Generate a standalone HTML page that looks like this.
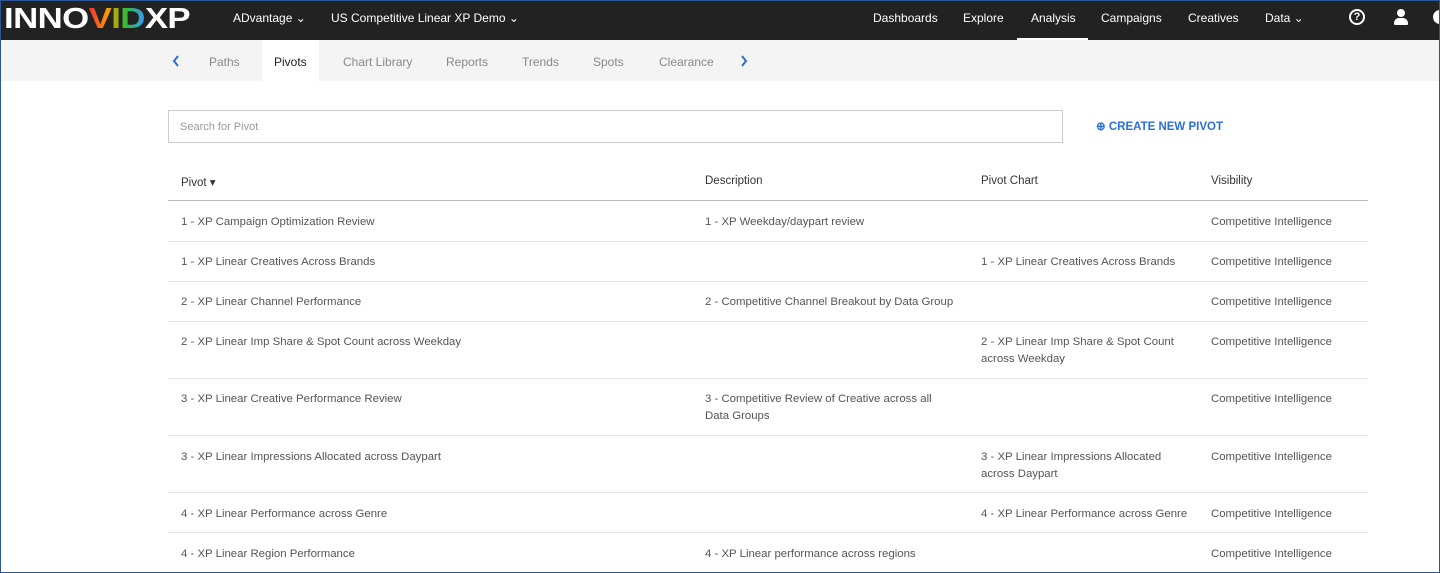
<!DOCTYPE html><html><head><style>
*{box-sizing:border-box;margin:0;padding:0}
body{width:1440px;height:573px;overflow:hidden;font-family:"Liberation Sans",Arial,sans-serif;background:#fff;position:relative}
.frame{position:absolute;left:0;top:0;width:1440px;height:573px;border:1px solid #2b5797;pointer-events:none;z-index:5}
.top{position:absolute;left:0;top:0;width:1440px;height:40px;background:#222;color:#fff;font-size:12px}
.top span{position:absolute;top:11px}
.sub{position:absolute;left:0;top:40px;width:1440px;height:41px;background:#f4f4f4;font-size:12px;color:#888}
.sub span{position:absolute;top:15px}
.t{position:absolute;font-size:11.4px;color:#555;line-height:17px}
.h{position:absolute;font-size:11.5px;color:#333;top:175px}
.ln{position:absolute;left:168px;width:1200px;height:1px;background:#e6e6e6}
</style></head><body>
<div class="frame"></div>
<div class="top">
<span style="left:4px;top:3px;font-size:29px;font-weight:bold;letter-spacing:-0.5px;transform:scaleX(1.2);transform-origin:left">INNO<span style="position:static;background:linear-gradient(90deg,#e33,#f90,#3b3,#39f);-webkit-background-clip:text;color:transparent">VID</span>XP</span>
<span style="left:233px">ADvantage ⌄</span>
<span style="left:331px">US Competitive Linear XP Demo ⌄</span>
<span style="left:873px">Dashboards</span><span style="left:963px">Explore</span>
<span style="left:1031px">Analysis</span><div style="position:absolute;left:1017px;top:38px;width:71px;height:2px;background:#fff"></div>
<span style="left:1101px">Campaigns</span><span style="left:1188px">Creatives</span><span style="left:1265px">Data ⌄</span>
<div style="position:absolute;left:1349px;top:9px;width:16px;height:16px;border:2px solid #fff;border-radius:50%;font-size:11px;font-weight:bold;text-align:center;line-height:12px">?</div>
<div style="position:absolute;left:1397px;top:9px;width:8px;height:8px;background:#fff;border-radius:50%"></div>
<div style="position:absolute;left:1394px;top:18px;width:14px;height:7px;background:#fff;border-radius:5px 5px 1px 1px"></div>
<div style="position:absolute;left:1433px;top:10px;width:14px;height:14px;background:#fff;border-radius:50%"></div>
</div>
<div class="sub">
<svg style="position:absolute;left:172px;top:15px" width="8" height="12" viewBox="0 0 8 12"><path d="M6 1L2 6l4 5" stroke="#2a6fd6" stroke-width="2" fill="none"/></svg>
<span style="left:209px">Paths</span>
<div style="position:absolute;left:262px;top:0;width:57px;height:41px;background:#fff"></div>
<span style="left:274px;color:#222">Pivots</span>
<span style="left:343px">Chart Library</span><span style="left:446px">Reports</span><span style="left:522px">Trends</span><span style="left:593px">Spots</span><span style="left:659px">Clearance</span>
<svg style="position:absolute;left:740px;top:15px" width="8" height="12" viewBox="0 0 8 12"><path d="M2 1l4 5-4 5" stroke="#2a6fd6" stroke-width="2" fill="none"/></svg>
</div>
<div style="position:absolute;left:168px;top:110px;width:895px;height:33px;border:1px solid #ccc;font-size:11px;color:#999;padding:10px 11px">Search for Pivot</div>
<div style="position:absolute;left:1096px;top:119px;font-size:11.5px;font-weight:bold;color:#2a6fd6">⊕ CREATE NEW PIVOT</div>
<div class="h" style="left:181px">Pivot ▾</div><div class="h" style="left:705px">Description</div><div class="h" style="left:981px">Pivot Chart</div><div class="h" style="left:1211px">Visibility</div>
<div class="ln" style="top:200px;background:#bbb"></div>
<div class="ln" style="top:241px"></div><div class="ln" style="top:281px"></div><div class="ln" style="top:321px"></div><div class="ln" style="top:378px"></div><div class="ln" style="top:435px"></div><div class="ln" style="top:492px"></div><div class="ln" style="top:532px"></div>
<div class="t" style="left:181px;top:214px">1 - XP Campaign Optimization Review</div><div class="t" style="left:705px;top:214px">1 - XP Weekday/daypart review</div><div class="t" style="left:1211px;top:214px">Competitive Intelligence</div>
<div class="t" style="left:181px;top:254px">1 - XP Linear Creatives Across Brands</div><div class="t" style="left:981px;top:254px">1 - XP Linear Creatives Across Brands</div><div class="t" style="left:1211px;top:254px">Competitive Intelligence</div>
<div class="t" style="left:181px;top:294px">2 - XP Linear Channel Performance</div><div class="t" style="left:705px;top:294px">2 - Competitive Channel Breakout by Data Group</div><div class="t" style="left:1211px;top:294px">Competitive Intelligence</div>
<div class="t" style="left:181px;top:334px">2 - XP Linear Imp Share &amp; Spot Count across Weekday</div><div class="t" style="left:981px;top:334px">2 - XP Linear Imp Share &amp; Spot Count<br>across Weekday</div><div class="t" style="left:1211px;top:334px">Competitive Intelligence</div>
<div class="t" style="left:181px;top:391px">3 - XP Linear Creative Performance Review</div><div class="t" style="left:705px;top:391px">3 - Competitive Review of Creative across all<br>Data Groups</div><div class="t" style="left:1211px;top:391px">Competitive Intelligence</div>
<div class="t" style="left:181px;top:449px">3 - XP Linear Impressions Allocated across Daypart</div><div class="t" style="left:981px;top:449px">3 - XP Linear Impressions Allocated<br>across Daypart</div><div class="t" style="left:1211px;top:449px">Competitive Intelligence</div>
<div class="t" style="left:181px;top:506px">4 - XP Linear Performance across Genre</div><div class="t" style="left:981px;top:506px">4 - XP Linear Performance across Genre</div><div class="t" style="left:1211px;top:506px">Competitive Intelligence</div>
<div class="t" style="left:181px;top:546px">4 - XP Linear Region Performance</div><div class="t" style="left:705px;top:546px">4 - XP Linear performance across regions</div><div class="t" style="left:1211px;top:546px">Competitive Intelligence</div>
</body></html>
